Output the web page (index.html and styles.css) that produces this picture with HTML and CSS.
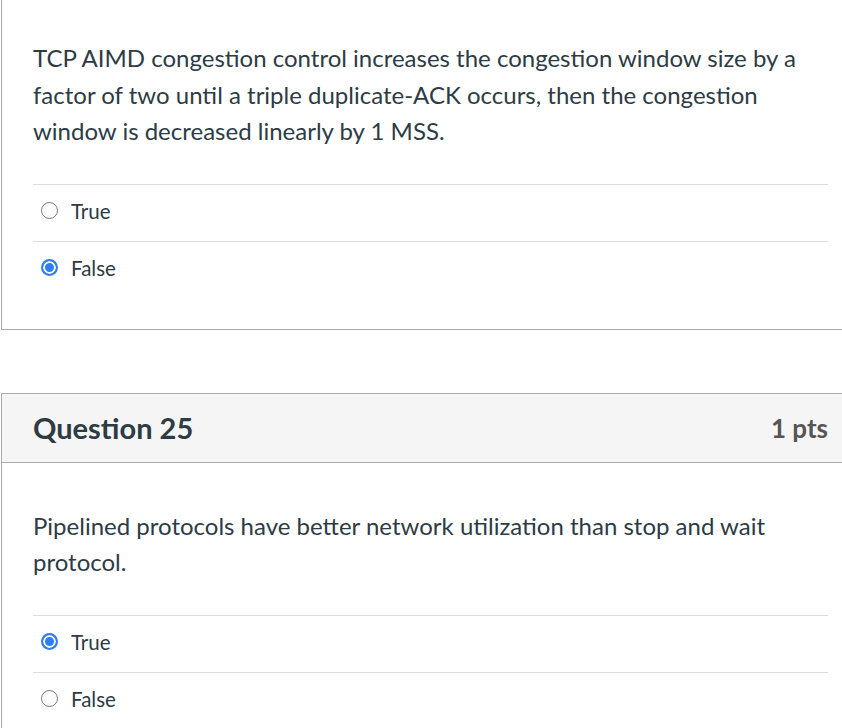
FILE: index.html
```html
<!DOCTYPE html>
<html lang="en">
<head>
<meta charset="utf-8">
<title>Quiz</title>
<link rel="stylesheet" href="styles.css">
</head>
<body>
<div class="quiz">
  <section class="question question--cut">
    <div class="question-body">
      <p class="question-text">TCP AIMD congestion control increases the congestion window size by a factor of two until a triple duplicate-ACK occurs, then the congestion window is decreased linearly by 1 MSS.</p>
      <ul class="answers">
        <li class="answer"><span class="radio"></span><span class="answer-label">True</span></li>
        <li class="answer"><span class="radio radio--checked"></span><span class="answer-label">False</span></li>
      </ul>
    </div>
  </section>

  <section class="question">
    <header class="question-header">
      <h2 class="question-title">Question 25</h2>
      <span class="question-points">1 pts</span>
    </header>
    <div class="question-body">
      <p class="question-text">Pipelined protocols have better network utilization than stop and wait protocol.</p>
      <ul class="answers">
        <li class="answer"><span class="radio radio--checked"></span><span class="answer-label">True</span></li>
        <li class="answer"><span class="radio"></span><span class="answer-label">False</span></li>
      </ul>
    </div>
  </section>
</div>
</body>
</html>
```
FILE: styles.css
```css
html, body {
  margin: 0;
  padding: 0;
  background: #ffffff;
  overflow: hidden;
}

body {
  font-family: Lato, "Liberation Sans", sans-serif;
  color: #2d3b45;
}

.quiz {
  display: flex;
  flex-direction: column;
  gap: 63px;
  padding-left: 1px;
}

.question {
  border: 1px solid #aaaaaa;
  border-right: 0;
  background: #ffffff;
}

.question--cut {
  margin-top: -6px;
}

.question-header {
  display: flex;
  align-items: center;
  justify-content: space-between;
  height: 68px;
  padding: 0 14px 0 31px;
  background: #f5f5f5;
  border-bottom: 1px solid #aaaaaa;
}

.question-title {
  margin: 0;
  font-size: 29px;
  font-weight: 700;
  color: #2d3b45;
}

.question-points {
  font-size: 26px;
  font-weight: 700;
  color: #555555;
}

.question-body {
  padding: 45px 14px 31px 31px;
}

.question-text {
  margin: 0 0 34px;
  font-size: 24px;
  line-height: 36.5px;
}

.answers {
  list-style: none;
  margin: 0;
  padding: 0;
}

.answer {
  box-sizing: border-box;
  display: flex;
  align-items: center;
  gap: 13px;
  height: 57px;
  padding: 0 0 4px 8px;
  border-top: 1px solid #dddddd;
}

.answer-label {
  font-size: 20.5px;
}

.radio {
  box-sizing: border-box;
  width: 17px;
  height: 17px;
  border-radius: 50%;
  border: 1.5px solid #767676;
  background: #ffffff;
  flex: none;
}

.radio--checked {
  border: 2px solid #2f7cf6;
  background: #2f7cf6;
  box-shadow: inset 0 0 0 2px #ffffff;
}
```
